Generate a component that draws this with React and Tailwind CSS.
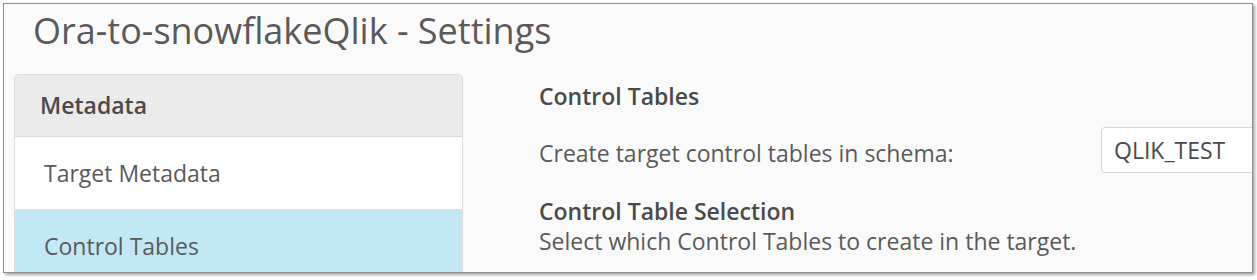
export default function App() {
  return (
    <div className="w-[1257px] h-[280px] bg-white overflow-hidden" style={{ fontFamily: '"Open Sans", "Noto Sans", sans-serif' }}>
      <div className="ml-[3px] mt-[3px] w-[1250px] h-[270px] border border-[#8c8c8c] bg-[#fafafa] shadow-[2px_2px_3px_rgba(0,0,0,0.35)] overflow-hidden flex flex-col">
        {/* title */}
        <div className="shrink-0 pl-[29px] pt-[7px] h-[70px] text-[36px] leading-[40px] text-[#5a5a5a] whitespace-nowrap">
          Ora-to-snowflakeQlik - Settings
        </div>

        <div className="flex flex-1 min-h-0">
          {/* sidebar */}
          <div className="shrink-0 ml-[10px] w-[449px] flex flex-col rounded-t-[5px] border border-b-0 border-[#dcdcdc] overflow-hidden">
            <div className="shrink-0 h-[62px] bg-[#ebebeb] border-b border-[#dcdcdc] flex items-center pl-[25px] text-[23px] font-semibold text-[#4a4a4a]">
              Metadata
            </div>
            <div className="shrink-0 h-[72px] bg-white flex items-center pl-[29px] text-[23px] text-[#5a5a5a]">
              Target Metadata
            </div>
            <div className="shrink-0 h-[74px] bg-[#c2e8f6] flex items-center pl-[29px] text-[23px] text-[#5a5a5a]">
              Control Tables
            </div>
          </div>

          {/* content */}
          <div className="flex-1 min-w-0 pl-[76px] pt-[7px] text-[23px] text-[#5a5a5a] whitespace-nowrap">
            <div className="font-semibold text-[#4a4a4a] leading-[30px]">Control Tables</div>
            <div className="flex items-center mt-[16px] h-[46px]">
              <div className="w-[562px] shrink-0 pt-[6px]">Create target control tables in schema:</div>
              <div className="shrink-0 h-[46px] w-[200px] border border-[#d4d4d4] rounded-[4px] bg-white flex items-center pl-[12px] text-[#4a4a4a]">
                QLIK_TEST
              </div>
            </div>
            <div className="mt-[23px] font-semibold text-[#4a4a4a] leading-[30px]">Control Table Selection</div>
            <div className="leading-[30px]">Select which Control Tables to create in the target.</div>
          </div>
        </div>
      </div>
    </div>
  );
}
